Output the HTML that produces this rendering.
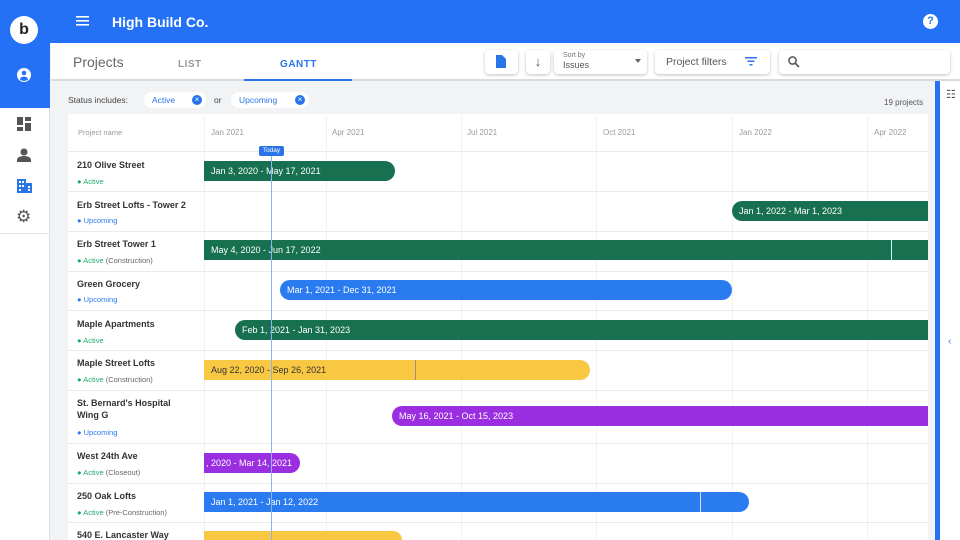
<!DOCTYPE html>
<html style="overflow:hidden"><head><meta charset="utf-8"><style>
*{box-sizing:border-box;margin:0;padding:0}
html,body{width:960px;height:540px;overflow:hidden}
body{font-family:"Liberation Sans",Arial,sans-serif;background:#f1f3f5;position:relative;color:#333}
.a{position:absolute}
.top{left:0;top:0;width:960px;height:43px;background:#2471f5}
.side{left:0;top:43px;width:50px;height:497px;background:#fff;border-right:1px solid #dde}
.hdr{left:51px;top:43px;width:909px;height:38px;background:#fff;border-bottom:2px solid #d8dbe0}
.btn{background:#fff;border-radius:4px;box-shadow:0 1px 3px rgba(0,0,0,.25);height:24px;top:50px}
.tbl{left:68px;top:114px;width:860px;height:426px;background:#fff}
.row{left:68px;width:860px;border-top:1px solid #e8eaec}
.nm{position:absolute;left:9px;font-size:9px;font-weight:bold;color:#333;line-height:12px}
.st{position:absolute;left:9px;font-size:7.5px;color:#666}
.g{color:#1faa6c}.b{color:#2a7af0}
.vl{top:115px;width:1px;height:425px;background:#f0f2f4}
.bar{height:20px;color:#fff;font-size:9px;line-height:20px;padding-left:7px;white-space:nowrap;overflow:hidden}
.mo{top:128px;font-size:8px;color:#999}
.chip{top:92px;height:16px;background:#fff;border-radius:8px;font-size:8.5px;color:#2a74ea;line-height:16px;padding-left:8px}
.x{position:absolute;right:4px;top:3px;width:10px;height:10px;border-radius:50%;background:#2a74ea;color:#fff;font-size:8px;line-height:10px;text-align:center}
</style></head><body>
<div class="a top"></div>
<div class="a" style="left:0;top:43px;width:50px;height:65px;background:#2471f5"></div>
<div class="a side" style="top:108px;height:432px"></div>
<div class="a" style="left:0;top:233px;width:50px;height:1px;background:#e3e5e8"></div>
<div class="a" style="left:10px;top:16px;width:28px;height:28px;border-radius:50%;background:#fff;color:#222;font-weight:bold;font-size:16px;text-align:center;line-height:27px">b</div>
<svg class="a" style="left:17px;top:68px" width="14" height="14"><circle cx="7" cy="7" r="7" fill="#fff"/><circle cx="7" cy="5" r="2.3" fill="#2471f5"/><path d="M2.8 11.2c1-2 2.5-2.6 4.2-2.6s3.2.6 4.2 2.6A6 6 0 0 1 2.8 11.2z" fill="#2471f5"/></svg>
<svg class="a" style="left:17px;top:117px" width="14" height="14"><rect x="0" y="0" width="6" height="8" fill="#555"/><rect x="8" y="0" width="6" height="4" fill="#555"/><rect x="0" y="10" width="6" height="4" fill="#555"/><rect x="8" y="6" width="6" height="8" fill="#555"/></svg>
<svg class="a" style="left:17px;top:148px" width="14" height="14"><circle cx="7" cy="4" r="3.5" fill="#555"/><path d="M0 14v-2c0-3 4-4 7-4s7 1 7 4v2z" fill="#555"/></svg>
<svg class="a" style="left:17px;top:179px" width="15" height="14"><rect x="0" y="0" width="9" height="14" fill="#2a74ea"/><rect x="9" y="4" width="6" height="10" fill="#2a74ea"/><g fill="#fff"><rect x="2" y="2" width="2" height="2"/><rect x="5" y="2" width="2" height="2"/><rect x="2" y="6" width="2" height="2"/><rect x="5" y="6" width="2" height="2"/><rect x="2" y="10" width="2" height="2"/><rect x="11" y="7" width="2" height="2"/><rect x="11" y="10" width="2" height="2"/></g></svg>
<div class="a" style="left:16px;top:207px;font-size:17px;color:#555">⚙</div>
<svg class="a" style="left:76px;top:16px" width="13" height="10"><rect y="0" width="13" height="1.6" fill="#fff"/><rect y="4" width="13" height="1.6" fill="#fff"/><rect y="8" width="13" height="1.6" fill="#fff"/></svg>
<div class="a" style="left:112px;top:14px;color:#fff;font-weight:bold;font-size:14px">High Build Co.</div>
<div class="a" style="left:923px;top:14px;width:15px;height:15px;border-radius:50%;background:#fff;color:#2471f5;font-weight:bold;font-size:11px;text-align:center;line-height:15px">?</div>
<div class="a hdr"></div>
<div class="a" style="left:73px;top:54px;font-size:14px;color:#666">Projects</div>
<div class="a" style="left:178px;top:59px;font-size:10px;color:#999;font-weight:bold;letter-spacing:.5px">LIST</div>
<div class="a" style="left:280px;top:59px;font-size:10px;color:#2a74ea;font-weight:bold;letter-spacing:.5px">GANTT</div>
<div class="a" style="left:244px;top:79px;width:108px;height:2px;background:#2a74ea"></div>
<div class="a btn" style="left:485px;width:33px"><svg style="position:absolute;left:11px;top:5px" width="10" height="13"><path d="M0 0h6l4 4v9H0z" fill="#2a74ea"/></svg></div>
<div class="a btn" style="left:526px;width:24px;font-size:13px;color:#555;text-align:center;line-height:24px">↓</div>
<div class="a btn" style="left:554px;width:93px"><div class="a" style="left:9px;top:2px;font-size:7px;color:#777">Sort by</div><div class="a" style="left:9px;top:10px;font-size:9px;color:#555">Issues</div><div class="a" style="left:81px;top:9px;border:3.5px solid transparent;border-top:4px solid #666"></div></div>
<div class="a btn" style="left:655px;width:115px"><div class="a" style="left:11px;top:6px;font-size:10.5px;color:#555">Project filters</div><svg style="position:absolute;left:90px;top:7px" width="12" height="9"><rect width="12" height="1.5" fill="#2a74ea"/><rect x="2.5" y="3.5" width="7" height="1.5" fill="#2a74ea"/><rect x="4.5" y="7" width="3" height="1.5" fill="#2a74ea"/></svg></div>
<div class="a btn" style="left:779px;width:171px"><svg style="position:absolute;left:9px;top:6px" width="12" height="12"><circle cx="4.5" cy="4.5" r="3.6" fill="none" stroke="#555" stroke-width="1.5"/><path d="M7 7l4 4" stroke="#555" stroke-width="1.6"/></svg></div>
<div class="a" style="left:68px;top:95px;font-size:8.5px;color:#444">Status includes:</div>
<div class="a chip" style="left:144px;width:62px">Active<span class="x">×</span></div>
<div class="a" style="left:214px;top:95px;font-size:8.5px;color:#444">or</div>
<div class="a chip" style="left:231px;width:78px">Upcoming<span class="x">×</span></div>
<div class="a" style="left:884px;top:98px;font-size:8px;color:#555">19 projects</div>
<div class="a" style="left:935px;top:81px;width:5px;height:459px;background:#2471f5"></div>
<div class="a" style="left:940px;top:81px;width:20px;height:459px;background:#fff"></div>
<div class="a" style="left:946px;top:88px;font-size:11px;color:#555">☷</div>
<div class="a" style="left:948px;top:336px;font-size:10px;color:#2a74ea">‹</div>
<div class="a tbl"></div>
<div class="a vl" style="left:204px"></div><div class="a vl" style="left:326px"></div><div class="a vl" style="left:461px"></div><div class="a vl" style="left:596px"></div><div class="a vl" style="left:732px"></div><div class="a vl" style="left:867px"></div>
<div class="a mo" style="left:78px;font-size:7.5px">Project name</div>
<div class="a mo" style="left:211px">Jan 2021</div><div class="a mo" style="left:332px">Apr 2021</div><div class="a mo" style="left:467px">Jul 2021</div><div class="a mo" style="left:603px">Oct 2021</div><div class="a mo" style="left:739px">Jan 2022</div><div class="a mo" style="left:874px">Apr 2022</div>
<div class="a row" style="top:151px;height:40px"><div class="nm" style="top:7px">210 Olive Street</div><div class="st g" style="top:25px">● Active</div></div>
<div class="a row" style="top:191px;height:40px"><div class="nm" style="top:7px">Erb Street Lofts - Tower 2</div><div class="st b" style="top:24px">● Upcoming</div></div>
<div class="a row" style="top:231px;height:40px"><div class="nm" style="top:6px">Erb Street Tower 1</div><div class="st" style="top:24px"><span class="g">● Active</span> (Construction)</div></div>
<div class="a row" style="top:271px;height:39px"><div class="nm" style="top:6px">Green Grocery</div><div class="st b" style="top:23px">● Upcoming</div></div>
<div class="a row" style="top:310px;height:40px"><div class="nm" style="top:7px">Maple Apartments</div><div class="st g" style="top:25px">● Active</div></div>
<div class="a row" style="top:350px;height:40px"><div class="nm" style="top:6px">Maple Street Lofts</div><div class="st" style="top:24px"><span class="g">● Active</span> (Construction)</div></div>
<div class="a row" style="top:390px;height:53px"><div class="nm" style="top:6px">St. Bernard's Hospital<br>Wing G</div><div class="st b" style="top:37px">● Upcoming</div></div>
<div class="a row" style="top:443px;height:40px"><div class="nm" style="top:6px">West 24th Ave</div><div class="st" style="top:24px"><span class="g">● Active</span> (Closeout)</div></div>
<div class="a row" style="top:483px;height:39px"><div class="nm" style="top:6px">250 Oak Lofts</div><div class="st" style="top:24px"><span class="g">● Active</span> (Pre-Construction)</div></div>
<div class="a row" style="top:522px;height:18px"><div class="nm" style="top:6px">540 E. Lancaster Way</div></div>
<div class="a bar" style="left:204px;top:161px;width:191px;background:#17704f;border-radius:0 10px 10px 0">Jan 3, 2020 - May 17, 2021</div>
<div class="a bar" style="left:732px;top:201px;width:196px;background:#17704f;border-radius:10px 0 0 10px">Jan 1, 2022 - Mar 1, 2023</div>
<div class="a bar" style="left:204px;top:240px;width:724px;background:#17704f">May 4, 2020 - Jun 17, 2022</div>
<div class="a" style="left:891px;top:240px;width:1px;height:20px;background:#cfe"></div>
<div class="a bar" style="left:280px;top:280px;width:452px;background:#2b7bf0;border-radius:10px">Mar 1, 2021 - Dec 31, 2021</div>
<div class="a bar" style="left:235px;top:320px;width:693px;background:#17704f;border-radius:10px 0 0 10px">Feb 1, 2021 - Jan 31, 2023</div>
<div class="a bar" style="left:204px;top:360px;width:386px;background:#f9c842;color:#333;border-radius:0 10px 10px 0">Aug 22, 2020 - Sep 26, 2021</div>
<div class="a" style="left:415px;top:360px;width:1px;height:20px;background:#a88"></div>
<div class="a bar" style="left:392px;top:406px;width:536px;background:#9a2ee0;border-radius:10px 0 0 10px">May 16, 2021 - Oct 15, 2023</div>
<div class="a bar" style="left:204px;top:453px;width:96px;background:#9a2ee0;border-radius:0 10px 10px 0;padding-left:2px">, 2020 - Mar 14, 2021</div>
<div class="a bar" style="left:204px;top:492px;width:545px;background:#2b7bf0;border-radius:0 10px 10px 0">Jan 1, 2021 - Jan 12, 2022</div>
<div class="a" style="left:700px;top:492px;width:1px;height:20px;background:#dde"></div>
<div class="a" style="left:204px;top:531px;width:198px;height:9px;background:#f9c842;border-radius:0 9px 0 0"></div>
<div class="a" style="left:271px;top:152px;width:1px;height:388px;background:#8ab4f0"></div>
<div class="a" style="left:259px;top:146px;width:25px;height:10px;background:#2a74ea;border-radius:2px;color:#fff;font-size:6.5px;text-align:center;line-height:10px">Today</div>
</body></html>
